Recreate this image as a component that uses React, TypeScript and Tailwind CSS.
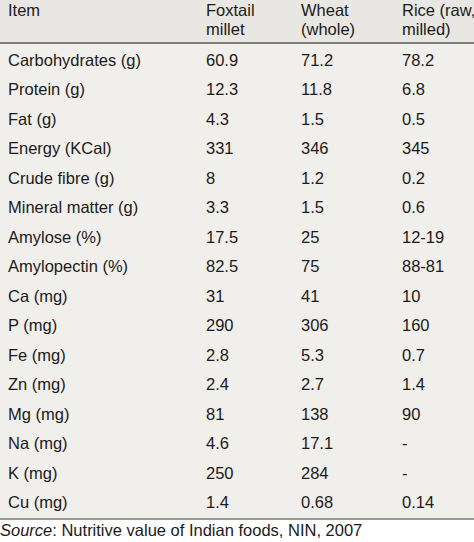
const rows: [string, string, string, string][] = [
  ['Carbohydrates (g)', '60.9', '71.2', '78.2'],
  ['Protein (g)', '12.3', '11.8', '6.8'],
  ['Fat (g)', '4.3', '1.5', '0.5'],
  ['Energy (KCal)', '331', '346', '345'],
  ['Crude fibre (g)', '8', '1.2', '0.2'],
  ['Mineral matter (g)', '3.3', '1.5', '0.6'],
  ['Amylose (%)', '17.5', '25', '12-19'],
  ['Amylopectin (%)', '82.5', '75', '88-81'],
  ['Ca (mg)', '31', '41', '10'],
  ['P (mg)', '290', '306', '160'],
  ['Fe (mg)', '2.8', '5.3', '0.7'],
  ['Zn (mg)', '2.4', '2.7', '1.4'],
  ['Mg (mg)', '81', '138', '90'],
  ['Na (mg)', '4.6', '17.1', '-'],
  ['K (mg)', '250', '284', '-'],
  ['Cu (mg)', '1.4', '0.68', '0.14'],
];

const cols = 'grid grid-cols-[206px_95px_101px_72px]';

export default function App() {
  return (
    <div className="w-[474px] h-[542px] bg-white text-[#1c1a1a] font-['Liberation_Sans',Arial,sans-serif] overflow-hidden">
      {/* Header */}
      <div className={`${cols} bg-[#e9e7e3] pt-[1px] pb-[3px] text-[16.5px] leading-[19px]`}>
        <div className="pl-[8px]">Item</div>
        <div>Foxtail<br />millet</div>
        <div>Wheat<br />(whole)</div>
        <div className="whitespace-nowrap">Rice (raw,<br />milled)</div>
      </div>
      <div className="h-[2px] bg-[#7d7d7d]" />

      {/* Body */}
      <div className="bg-[#f1efeb] pt-[1.5px] text-[16.5px] leading-[29.5px]">
        {rows.map(([item, foxtail, wheat, rice]) => (
          <div key={item} className={cols}>
            <div className="pl-[8px] whitespace-nowrap">{item}</div>
            <div>{foxtail}</div>
            <div>{wheat}</div>
            <div>{rice}</div>
          </div>
        ))}
      </div>
      <div className="h-[2px] bg-[#9a9a9a]" />

      {/* Source */}
      <p className="pt-[1px] text-[16.5px] leading-[19px] whitespace-nowrap">
        <span className="italic">Source</span>: Nutritive value of Indian foods, NIN, 2007
      </p>
    </div>
  );
}
